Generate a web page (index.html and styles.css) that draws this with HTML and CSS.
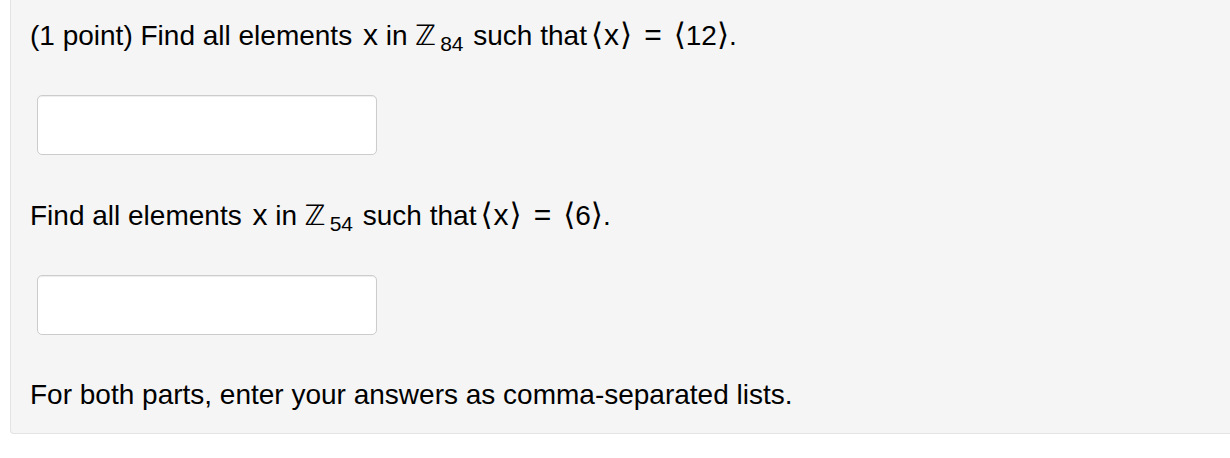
FILE: index.html
```html
<!DOCTYPE html>
<html>
<head>
<meta charset="utf-8">
<link rel="stylesheet" href="styles.css">
</head>
<body>
<div class="panel">
  <p class="line">(1 point) Find all elements <span class="mv">x</span> in <span class="zz">ℤ</span><sub class="sb">84</sub> such that<span class="ang open">⟨</span><span class="mv in">x</span><span class="ang">⟩</span><span class="eq">=</span><span class="ang">⟨</span>12<span class="ang">⟩</span>.</p>
  <div class="field"><input class="answer" type="text"></div>
  <p class="line">Find all elements <span class="mv">x</span> in <span class="zz">ℤ</span><sub class="sb">54</sub> such that<span class="ang open">⟨</span><span class="mv in">x</span><span class="ang">⟩</span><span class="eq">=</span><span class="ang">⟨</span>6<span class="ang">⟩</span>.</p>
  <div class="field"><input class="answer" type="text"></div>
  <p class="line">For both parts, enter your answers as comma-separated lists.</p>
</div>
</body>
</html>
```
FILE: styles.css
```css
html, body {
  margin: 0;
  padding: 0;
  background: #ffffff;
}
body {
  font-family: "Liberation Sans", Arial, sans-serif;
  color: #000;
}
.panel {
  margin-left: 10px;
  margin-top: -4px;
  background: #f5f5f5;
  border: 1px solid #e3e3e3;
  border-right: none;
  border-radius: 4px 0 0 4px;
  padding: 21px 0 21px 19px;
}
.line {
  margin: 0;
  font-size: 28px;
  line-height: 34px;
  height: 34px;
  white-space: nowrap;
}
.mv {
  font-size: 30px;
  margin: 0 0 0 3px;
}
.mv.in {
  margin: 0 1px;
}
.zz {
  font-family: "DejaVu Sans", sans-serif;
  font-size: 28px;
}
.sb {
  font-size: 21px;
  vertical-align: -6px;
  line-height: 0;
  margin-left: 4px;
  margin-right: 2px;
}
.ang {
  font-family: "DejaVu Sans", sans-serif;
  font-size: 31px;
  line-height: 0;
}
.ang.open {
  margin-left: 4px;
}
.eq {
  font-size: 30px;
  margin: 0 12px;
}
.field {
  padding: 43px 0 43px 7px;
}
.answer {
  display: block;
  box-sizing: border-box;
  width: 340px;
  height: 60px;
  margin: 0;
  background: #fff;
  border: 1px solid #cccccc;
  border-radius: 5px;
  box-shadow: inset 0 1px 1px rgba(0,0,0,0.075);
  outline: none;
}
```
